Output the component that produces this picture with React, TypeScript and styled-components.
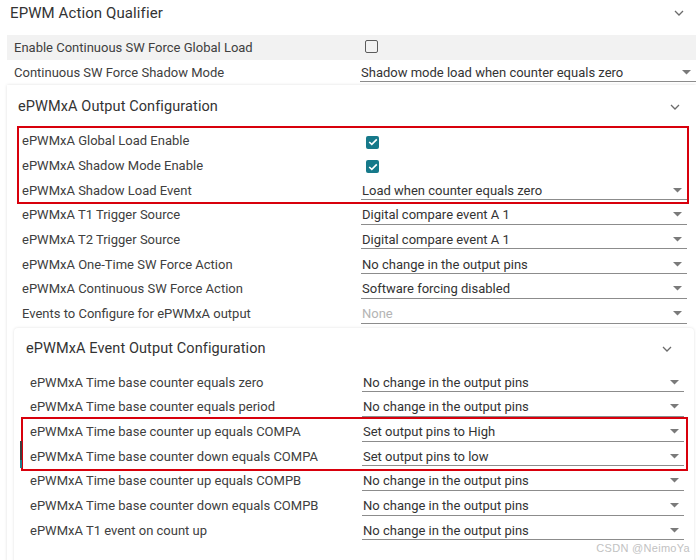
import React from 'react'
import styled, { createGlobalStyle } from 'styled-components'

const GlobalStyle = createGlobalStyle`
  html, body {
    margin: 0;
    padding: 0;
    background: #ffffff;
  }
  body {
    font-family: Roboto, 'Noto Sans', Arial, sans-serif;
    color: #333333;
    -webkit-font-smoothing: antialiased;
  }
`

const ROW_H = 24.7

const Page = styled.div`
  position: relative;
  width: 696px;
  height: 560px;
  overflow: hidden;
  background: #fff;
`

const TopHeader = styled.div`
  display: flex;
  align-items: center;
  justify-content: space-between;
  height: 26px;
  padding: 0 12px 0 10px;
`

const Title = styled.div<{ $size?: number }>`
  font-size: ${(p) => p.$size ?? 15}px;
  color: #333;
  letter-spacing: 0.1px;
`

const TopBody = styled.div`
  margin-top: 9px;
  padding-left: 7px;
`

/* one label / value row; label column width differs per nesting level */
const Row = styled.div<{ $labelW: number; $padL: number; $shaded?: boolean }>`
  display: grid;
  grid-template-columns: ${(p) => p.$labelW}px 1fr;
  align-items: center;
  height: ${ROW_H}px;
  padding-left: ${(p) => p.$padL}px;
  background: ${(p) => (p.$shaded ? '#f2f2f2' : 'transparent')};
`

const Label = styled.div`
  font-size: 13px;
  color: #404040;
  white-space: nowrap;
`

const Select = styled.div<{ $disabled?: boolean }>`
  display: flex;
  align-items: center;
  justify-content: space-between;
  height: 18px;
  margin-top: 1px;
  border-bottom: 1px solid #8c8c8c;
  font-size: 13px;
  color: ${(p) => (p.$disabled ? '#b4b4b4' : '#333')};
  white-space: nowrap;
  padding-left: 1px;
`

const Arrow = styled.svg`
  margin-right: 5px;
  flex: none;
`

const Box = styled.span<{ $checked?: boolean }>`
  display: inline-flex;
  align-items: center;
  justify-content: center;
  width: 13px;
  height: 13px;
  margin-left: 5px;
  box-sizing: border-box;
  border-radius: 2px;
  border: ${(p) => (p.$checked ? 'none' : '1.5px solid #5c5c5c')};
  background: ${(p) => (p.$checked ? '#16798a' : 'transparent')};
`

const Card = styled.div<{ $padL: number; $padR: number; $mt: number; $radius?: number }>`
  margin-top: ${(p) => p.$mt}px;
  padding: 0 ${(p) => p.$padR}px 0 ${(p) => p.$padL}px;
  background: #fff;
  border-radius: ${(p) => p.$radius ?? 0}px;
  box-shadow: 0 0 3px rgba(0, 0, 0, 0.13);
`

const CardHeader = styled.div<{ $h: number; $padL: number; $padR: number }>`
  display: flex;
  align-items: center;
  justify-content: space-between;
  height: ${(p) => p.$h}px;
  padding: 0 ${(p) => p.$padR}px 0 ${(p) => p.$padL}px;
`

const Rows = styled.div<{ $ml: number; $mr: number }>`
  margin: 0 ${(p) => p.$mr}px 0 ${(p) => p.$ml}px;
`

const Highlight = styled.div<{ $ml: number; $mr: number; $marker?: boolean }>`
  position: relative;
  margin: 0 ${(p) => p.$mr}px 0 ${(p) => p.$ml}px;
  outline: 2.5px solid #d8000c;
  outline-offset: -0.5px;

  &::before {
    content: '';
    display: ${(p) => (p.$marker ? 'block' : 'none')};
    position: absolute;
    z-index: 1;
    left: -3px;
    top: 22px;
    width: 2px;
    height: 27px;
    background: linear-gradient(#3d3d3d 0 70%, #1c7f8c 70% 100%);
  }
`

const Watermark = styled.div`
  position: absolute;
  right: 6px;
  bottom: 6px;
  font-family: 'Liberation Sans', Arial, sans-serif;
  font-size: 11px;
  letter-spacing: 0.3px;
  color: #c2c2c2;
  text-shadow: 0 0 1px #fff;
`

function Chevron() {
  return (
    <svg width="10" height="6" viewBox="0 0 10 6">
      <polyline points="1,1 5,5 9,1" fill="none" stroke="#6b6b6b" strokeWidth="1.3" />
    </svg>
  )
}

function DropArrow() {
  return (
    <Arrow width="9" height="5" viewBox="0 0 9 5">
      <polygon points="0,0 9,0 4.5,4.5" fill="#7a7a7a" />
    </Arrow>
  )
}

function Check({ checked }: { checked?: boolean }) {
  return (
    <div>
      <Box $checked={checked}>
        {checked && (
          <svg width="10" height="8" viewBox="0 0 10 8">
            <polyline points="1.2,4 3.8,6.4 8.8,1.4" fill="none" stroke="#fff" strokeWidth="1.6" />
          </svg>
        )}
      </Box>
    </div>
  )
}

type Field = { label: string; value?: string; check?: boolean; checked?: boolean; disabled?: boolean }

function FieldRow({ f, labelW, padL, shaded }: { f: Field; labelW: number; padL: number; shaded?: boolean }) {
  return (
    <Row $labelW={labelW} $padL={padL} $shaded={shaded}>
      <Label>{f.label}</Label>
      {f.check ? (
        <Check checked={f.checked} />
      ) : (
        <Select $disabled={f.disabled}>
          <span>{f.value}</span>
          <DropArrow />
        </Select>
      )}
    </Row>
  )
}

const outputHighlighted: Field[] = [
  { label: 'ePWMxA Global Load Enable', check: true, checked: true },
  { label: 'ePWMxA Shadow Mode Enable', check: true, checked: true },
  { label: 'ePWMxA Shadow Load Event', value: 'Load when counter equals zero' },
]

const outputRest: Field[] = [
  { label: 'ePWMxA T1 Trigger Source', value: 'Digital compare event A 1' },
  { label: 'ePWMxA T2 Trigger Source', value: 'Digital compare event A 1' },
  { label: 'ePWMxA One-Time SW Force Action', value: 'No change in the output pins' },
  { label: 'ePWMxA Continuous SW Force Action', value: 'Software forcing disabled' },
  { label: 'Events to Configure for ePWMxA output', value: 'None', disabled: true },
]

const noChange = 'No change in the output pins'

const eventsBefore: Field[] = [
  { label: 'ePWMxA Time base counter equals zero', value: noChange },
  { label: 'ePWMxA Time base counter equals period', value: noChange },
]

const eventsHighlighted: Field[] = [
  { label: 'ePWMxA Time base counter up equals COMPA', value: 'Set output pins to High' },
  { label: 'ePWMxA Time base counter down equals COMPA', value: 'Set output pins to low' },
]

const eventsAfter: Field[] = [
  { label: 'ePWMxA Time base counter up equals COMPB', value: noChange },
  { label: 'ePWMxA Time base counter down equals COMPB', value: noChange },
  { label: 'ePWMxA T1 event on count up', value: noChange },
]

export default function App() {
  return (
    <Page>
      <GlobalStyle />
      <TopHeader>
        <Title $size={15}>EPWM Action Qualifier</Title>
        <Chevron />
      </TopHeader>

      <TopBody>
        <FieldRow
          f={{ label: 'Enable Continuous SW Force Global Load', check: true }}
          labelW={346}
          padL={7}
          shaded
        />
        <FieldRow
          f={{ label: 'Continuous SW Force Shadow Mode', value: 'Shadow mode load when counter equals zero' }}
          labelW={346}
          padL={7}
        />

        <Card $padL={7} $padR={2} $mt={1}>
          <CardHeader $h={43} $padL={4} $padR={14}>
            <Title $size={14.5}>ePWMxA Output Configuration</Title>
            <Chevron />
          </CardHeader>

          <Highlight $ml={5} $mr={7}>
            {outputHighlighted.map((f) => (
              <FieldRow key={f.label} f={f} labelW={339} padL={3} />
            ))}
          </Highlight>
          <Rows $ml={5} $mr={7}>
            {outputRest.map((f) => (
              <FieldRow key={f.label} f={f} labelW={339} padL={3} />
            ))}
          </Rows>

          <Card $padL={9} $padR={8} $mt={2} $radius={4}>
            <CardHeader $h={42} $padL={3} $padR={14}>
              <Title $size={14.5}>ePWMxA Event Output Configuration</Title>
              <Chevron />
            </CardHeader>
            <Rows $ml={0} $mr={2}>
              {eventsBefore.map((f) => (
                <FieldRow key={f.label} f={f} labelW={332} padL={7} />
              ))}
            </Rows>
            <Highlight $ml={0} $mr={0} $marker>
              {eventsHighlighted.map((f) => (
                <Rows key={f.label} $ml={0} $mr={2}>
                  <FieldRow f={f} labelW={332} padL={7} />
                </Rows>
              ))}
            </Highlight>
            <Rows $ml={0} $mr={2}>
              {eventsAfter.map((f) => (
                <FieldRow key={f.label} f={f} labelW={332} padL={7} />
              ))}
            </Rows>
            <div style={{ height: 40 }} />
          </Card>
        </Card>
      </TopBody>

      <Watermark>CSDN @NeimoYa</Watermark>
    </Page>
  )
}
